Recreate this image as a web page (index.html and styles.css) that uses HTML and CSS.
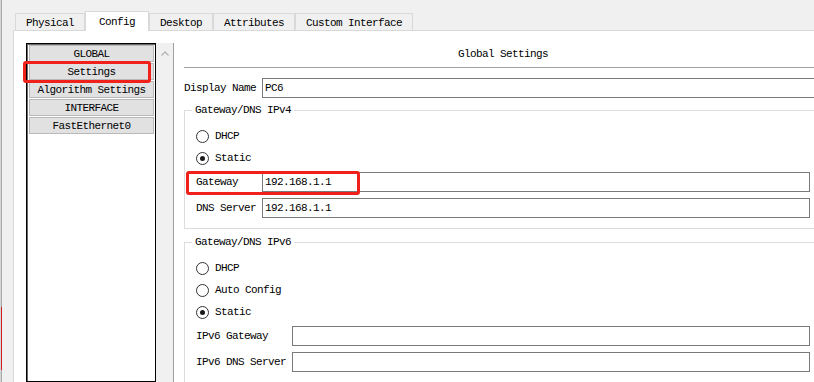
FILE: index.html
```html
<!DOCTYPE html>
<html>
<head>
  <meta charset="UTF-8">
  <title>PC6 Config</title>
  <link rel="stylesheet" href="styles.css">
</head>
<body>
  <div class="app">
    <div class="edge"><div class="edge-mark"></div></div>

    <div class="main">
      <div class="tabs">
        <div class="tab">Physical</div>
        <div class="tab active">Config</div>
        <div class="tab">Desktop</div>
        <div class="tab">Attributes</div>
        <div class="tab">Custom Interface</div>
      </div>

      <div class="panel">
        <div class="sidebar">
          <div class="list">
            <div class="item">GLOBAL</div>
            <div class="item">Settings</div>
            <div class="item">Algorithm Settings</div>
            <div class="item">INTERFACE</div>
            <div class="item">FastEthernet0</div>
            <div class="mark mark-settings"></div>
          </div>
          <div class="scroll">
            <svg class="arrow" width="8" height="5" viewBox="0 0 8 5">
              <polyline points="0.5,4.5 4,1 7.5,4.5" fill="none" stroke="#b4b4b4" stroke-width="1.3"/>
            </svg>
          </div>
        </div>

        <div class="content">
          <div class="title">Global Settings</div>

          <div class="name-row">
            <span class="name-label">Display Name</span>
            <div class="input">PC6</div>
          </div>

          <fieldset class="group">
            <legend>Gateway/DNS IPv4</legend>
            <div class="radio-row"><span class="radio"></span>DHCP</div>
            <div class="radio-row"><span class="radio checked"></span>Static</div>
            <div class="fields">
              <div class="field">
                <span class="label">Gateway</span>
                <div class="input">192.168.1.1</div>
                <div class="mark mark-gateway"></div>
              </div>
              <div class="field">
                <span class="label">DNS Server</span>
                <div class="input">192.168.1.1</div>
              </div>
            </div>
          </fieldset>

          <fieldset class="group group-v6">
            <legend>Gateway/DNS IPv6</legend>
            <div class="radio-row"><span class="radio"></span>DHCP</div>
            <div class="radio-row"><span class="radio"></span>Auto Config</div>
            <div class="radio-row"><span class="radio checked"></span>Static</div>
            <div class="fields">
              <div class="field">
                <span class="label wide">IPv6 Gateway</span>
                <div class="input"></div>
              </div>
              <div class="field">
                <span class="label wide">IPv6 DNS Server</span>
                <div class="input"></div>
              </div>
            </div>
          </fieldset>
        </div>
      </div>
    </div>
  </div>
</body>
</html>
```

FILE: styles.css
```css
*{
  box-sizing: border-box;
}

body{
  margin: 0;
  background-color: #f0f0f0;
  color: #000000;
  font-family: "Liberation Mono", "DejaVu Sans Mono", monospace;
  font-size: 11px;
  letter-spacing: -0.6px;
  overflow: hidden;
}

.app{
  display: flex;
  height: 100vh;
}

.edge{
  width: 2px;
  border-left: 1px solid #d6d6d6;
  background-color: #a8a8a8;
}

.edge-mark{
  margin-top: 307px;
  height: 63px;
  background-color: #d01c1c;
}

.main{
  flex: 1;
  display: flex;
  flex-direction: column;
  padding-left: 11px;
  min-width: 0;
}

/* tab strip */
.tabs{
  display: flex;
  align-items: flex-end;
  height: 19px;
  margin-top: 11px;
  margin-left: 2px;
}

.tab{
  height: 17px;
  min-width: 64px;
  padding: 1px 10px 0;
  border: 1px solid #d9d9d9;
  border-bottom: none;
  line-height: 16px;
  text-align: center;
  white-space: nowrap;
}

.tab.active{
  position: relative;
  z-index: 1;
  height: 20px;
  margin-bottom: -1px;
  line-height: 18px;
  background-color: #ffffff;
}

.panel{
  flex: 1;
  display: flex;
  min-height: 0;
  padding: 12px 0 0 12px;
  background-color: #ffffff;
  border-top: 1px solid #d9d9d9;
  border-left: 1px solid #d9d9d9;
}

/* left list */
.sidebar{
  display: flex;
}

.list{
  position: relative;
  width: 130px;
  padding: 1px 1px 0 2px;
  border: 1px solid #000000;
  box-shadow: inset 1px 1px 0 #6a6a6a;
}

.item{
  height: 17px;
  margin-bottom: 1px;
  padding-top: 1px;
  border: 1px solid #b9b9b9;
  background-color: #e1e1e1;
  line-height: 14px;
  text-align: center;
  white-space: nowrap;
}

.scroll{
  width: 18px;
  padding-top: 8px;
  background-color: #f0f0f0;
  border-right: 1px solid #a0a0a0;
  text-align: center;
}

.arrow{
  display: block;
  margin: 0 auto;
}

/* right side */
.content{
  flex: 1;
  margin-left: 10px;
  margin-right: -8px;
  min-width: 0;
}

.title{
  height: 25px;
  padding-top: 1px;
  line-height: 20px;
  text-align: center;
  border-bottom: 1px solid #a0a0a0;
}

.name-row{
  display: flex;
  align-items: center;
  height: 20px;
  margin-top: 10px;
}

.name-label{
  width: 78px;
  white-space: nowrap;
}

.input{
  flex: 1;
  height: 20px;
  padding-left: 2px;
  border: 1px solid #7a7a7a;
  line-height: 18px;
  white-space: nowrap;
}

.group{
  margin: 5px 0 0;
  padding: 8px 0 10px 11px;
  min-width: 0;
  border: 1px solid #dcdcdc;
}

.group-v6{
  margin-top: 6px;
}

.group legend{
  margin-left: -4px;
  padding: 0 3px;
  line-height: 14px;
}

.radio-row{
  display: flex;
  align-items: center;
  height: 22px;
}

.radio{
  position: relative;
  width: 13px;
  height: 13px;
  margin-right: 6px;
  border: 1px solid #333333;
  border-radius: 50%;
  background-color: #ffffff;
}

.radio.checked::after{
  content: "";
  position: absolute;
  left: 3px;
  top: 3px;
  width: 5px;
  height: 5px;
  border-radius: 50%;
  background-color: #1a1a1a;
}

.fields{
  display: flex;
  flex-direction: column;
  gap: 6px;
  margin-top: 3px;
}

.field{
  position: relative;
  display: flex;
  align-items: center;
  width: 614px;
  height: 20px;
}

.label{
  width: 66px;
  white-space: nowrap;
}

.label.wide{
  width: 96px;
}

/* red annotation boxes */
.mark{
  position: absolute;
  border: 3px solid #f0211b;
  border-radius: 3px;
}

.mark-settings{
  left: -4px;
  top: 17px;
  width: 128px;
  height: 22px;
}

.mark-gateway{
  left: -10px;
  top: -1px;
  width: 174px;
  height: 24px;
}
```
